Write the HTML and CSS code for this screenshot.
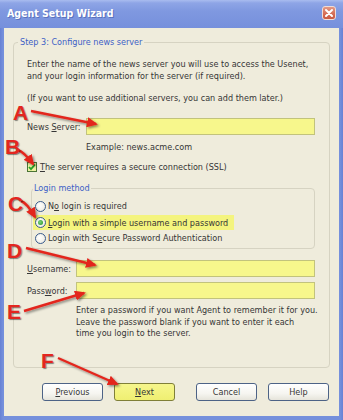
FILE: index.html
```html
<!DOCTYPE html>
<html lang="en">
<head>
<meta charset="utf-8">
<title>Agent Setup Wizard</title>
<link rel="stylesheet" href="styles.css">
</head>
<body>
<div class="window">
  <div class="titlebar">
    <span class="title">Agent Setup Wizard</span>
    <span class="close"><svg width="12" height="12" viewBox="0 0 12 12"><path d="M3 3 L9 9 M9 3 L3 9" stroke="#fff" stroke-width="2" stroke-linecap="round"/></svg></span>
  </div>
  <div class="body">
    <fieldset class="group">
      <legend>Step 3: Configure news server</legend>
      <p class="intro">Enter the name of the news server you will use to access the Usenet,<br>and your login information for the server (if required).</p>
      <p class="note">(If you want to use additional servers, you can add them later.)</p>
      <div class="field server"><label class="lbl">News <u>S</u>erver:</label><input class="input" type="text"></div>
      <div class="example">Example: news.acme.com</div>
      <div class="check-row">
        <span class="checkbox"><svg width="8" height="8" viewBox="0 0 8 8"><path d="M1 4 L3 6.2 L7 1.5" fill="none" stroke="#25a325" stroke-width="1.8"/></svg></span>
        <span><u>T</u>he server requires a secure connection (SSL)</span>
      </div>
      <fieldset class="login">
        <legend>Login method</legend>
        <div class="radio-row"><span class="radio"></span><span>N<u>o</u> login is required</span></div>
        <div class="radio-row hl"><span class="radio on"></span><span><u>L</u>ogin with a simple username and password</span></div>
        <div class="radio-row"><span class="radio"></span><span>Login with S<u>e</u>cure Password Authentication</span></div>
      </fieldset>
      <div class="field user"><label class="lbl short"><u>U</u>sername:</label><input class="input" type="text"></div>
      <div class="field pass"><label class="lbl short">Pass<u>w</u>ord:</label><input class="input" type="password"></div>
      <p class="help">Enter a password if you want Agent to remember it for you.<br>Leave the password blank if you want to enter it each<br>time you login to the server.</p>
    </fieldset>
    <div class="footer">
      <button class="btn"><u>P</u>revious</button>
      <button class="btn next"><u>N</u>ext</button>
      <button class="btn cancel">Cancel</button>
      <button class="btn">Help</button>
    </div>
  </div>

  <svg class="arrows" width="343" height="420" viewBox="0 0 343 420">
    <defs>
      <marker id="head" markerUnits="userSpaceOnUse" markerWidth="11" markerHeight="10" refX="9" refY="5" orient="auto">
        <path d="M0 0 L11 5 L0 10 Z" fill="#e3261f"/>
      </marker>
      <filter id="shadow" x="-20%" y="-20%" width="140%" height="140%">
        <feDropShadow dx="1.5" dy="1.5" stdDeviation="0.8" flood-color="#000" flood-opacity="0.45"/>
      </filter>
    </defs>
    <g stroke="#e3261f" stroke-width="2.4" fill="none" marker-end="url(#head)" filter="url(#shadow)">
      <path d="M31 111 L96 124"/>
      <path d="M18 150 Q24 152 33 164"/>
      <path d="M21 201 Q27 203 35 217"/>
      <path d="M26 248 L95 265"/>
      <path d="M24 311 L84 293"/>
      <path d="M58 358 L117 384"/>
    </g>
  </svg>
  <span class="mark mk-a">A</span>
  <span class="mark mk-b">B</span>
  <span class="mark mk-c">C</span>
  <span class="mark mk-d">D</span>
  <span class="mark mk-e">E</span>
  <span class="mark mk-f">F</span>
</div>
</body>
</html>
```

FILE: styles.css
```css
html, body {
  margin: 0;
  padding: 0;
  background: #ffffff;
}

body {
  font-family: "DejaVu Sans Condensed", "DejaVu Sans", sans-serif;
  font-stretch: semi-condensed;
  font-size: 9px;
  line-height: 12px;
  color: #363636;
}

.window {
  position: relative;
  width: 343px;
  height: 420px;
  box-sizing: border-box;
  background: linear-gradient(90deg, #6781d4 0, #7590dc 3px, #7590dc 340px, #6781d4 343px);
  display: flex;
  flex-direction: column;
  overflow: hidden;
}

.titlebar {
  height: 28px;
  flex: none;
  display: flex;
  align-items: center;
  justify-content: space-between;
  padding: 0 7px 2px 7px;
  box-sizing: border-box;
  background: linear-gradient(180deg, #a9bcef 0, #8ea5e6 3px, #7f98e0 40%, #7690dc 100%);
}

.title {
  color: #ffffff;
  font-family: "DejaVu Sans Condensed", "DejaVu Sans", sans-serif;
  font-stretch: semi-condensed;
  font-weight: bold;
  font-size: 10.5px;
  text-shadow: 1px 1px 0 #5a72bd;
}

.close {
  width: 14px;
  height: 14px;
  box-sizing: border-box;
  border: 1px solid #f1dcd6;
  border-radius: 3px;
  background: linear-gradient(180deg, #e49a86 0, #d46b53 60%, #c95a43 100%);
  display: flex;
  align-items: center;
  justify-content: center;
}

.body {
  flex: 1;
  margin: 0 4px 4px 4px;
  background: #efecdc;
  padding: 8px 9px 0 9px;
  box-sizing: border-box;
}

fieldset {
  margin: 0;
  min-width: 0;
  box-sizing: border-box;
}

legend {
  color: #3d5fc6;
  line-height: 12px;
}

.group {
  height: 332px;
  border: 1px solid #d6d3c2;
  border-radius: 4px;
  padding: 0 14px 0 13px;
}

.group > legend {
  padding: 0 2px;
  margin-left: -9px;
}

p {
  margin: 0;
  white-space: nowrap;
}

.intro {
  margin-top: 10px;
}

.note {
  margin-top: 10px;
}

.field {
  display: flex;
  align-items: center;
}

.server {
  margin-top: 14px;
}

.lbl {
  width: 59px;
  flex: none;
}

.lbl.short {
  width: 49px;
}

.input {
  flex: 1;
  height: 17px;
  box-sizing: border-box;
  margin: 0;
  padding: 0;
  border: 1px solid #c2c37c;
  background: #f7f78c;
  font: inherit;
  outline: none;
}

.example {
  margin-top: 6px;
  padding-left: 59px;
}

.check-row {
  margin-top: 8px;
  display: flex;
  align-items: center;
  gap: 3px;
  height: 12px;
}

.checkbox {
  width: 10px;
  height: 10px;
  box-sizing: border-box;
  border: 1px solid #4b7436;
  background: #eef2a2;
  display: flex;
  align-items: center;
  justify-content: center;
}

.login {
  margin: 9px 0 0 4px;
  border: 1px solid #d6d3c2;
  border-radius: 4px;
  padding: 4px 3px 2px 3px;
}

.login > legend {
  padding: 0 1px;
  margin-left: -2px;
}

.radio-row {
  display: flex;
  align-items: center;
  gap: 2px;
  height: 16px;
}

.radio-row.hl {
  display: inline-flex;
  background: #f4f47e;
  margin-left: -2px;
  padding: 0 6px 0 2px;
  height: 15px;
  margin-top: 1px;
  vertical-align: top;
}

.radio {
  position: relative;
  width: 11px;
  height: 11px;
  box-sizing: border-box;
  border: 1px solid #3a5c8e;
  border-radius: 50%;
  background: radial-gradient(circle at 40% 40%, #ffffff 0, #f1f0ea 60%, #dcdad0 100%);
  flex: none;
}

.radio.on::after {
  content: "";
  position: absolute;
  left: 2px;
  top: 2px;
  width: 5px;
  height: 5px;
  border-radius: 50%;
  background: radial-gradient(circle at 40% 40%, #7fd17f 0, #2e9e2e 80%);
}

.user {
  margin-top: 11px;
}

.pass {
  margin-top: 5px;
}

.help {
  margin-top: 6px;
  padding-left: 49px;
  line-height: 11.5px;
}

.footer {
  display: flex;
  justify-content: flex-end;
  padding-top: 15px;
  padding-right: 1px;
}

.btn {
  width: 61px;
  height: 18px;
  box-sizing: border-box;
  margin: 0 0 0 11px;
  padding: 0;
  border: 1px solid #4d6386;
  border-radius: 3px;
  background: linear-gradient(180deg, #ffffff 0, #f6f5f0 60%, #e6e4da 100%);
  font: inherit;
  color: #363636;
  line-height: 16px;
  text-align: center;
}

.btn.next {
  background: linear-gradient(180deg, #f6f68c 0, #efef72 100%);
  border-color: #7f7f38;
}

.btn.cancel {
  margin-left: 21px;
}

.arrows {
  position: absolute;
  left: 0;
  top: 0;
  pointer-events: none;
}

.mark {
  position: absolute;
  font-family: "Liberation Sans", Arial, sans-serif;
  font-weight: bold;
  font-size: 21px;
  line-height: 21px;
  color: #e3261f;
  text-shadow: 1px 1px 1px rgba(0, 0, 0, 0.45);
}

.mk-a { left: 13px; top: 102px; }
.mk-b { left: 5px; top: 136px; }
.mk-c { left: 8px; top: 193px; }
.mk-d { left: 7px; top: 240px; }
.mk-e { left: 7px; top: 301px; }
.mk-f { left: 41px; top: 350px; }
```
